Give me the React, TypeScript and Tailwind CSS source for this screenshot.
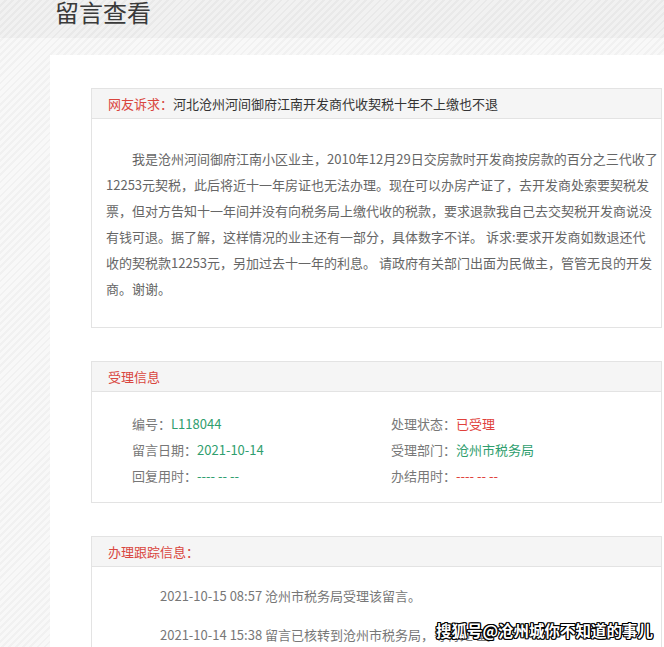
import React from "react";

const font = "font-['Noto_Sans_CJK_SC','Microsoft_YaHei',sans-serif]";

const Section = ({ title, children }: { title: React.ReactNode; children: React.ReactNode }) => (
  <div className="w-[571px] border border-[#e3e3e3] bg-white">
    <div className="h-[30px] flex items-center pl-[16px] bg-[#f5f5f5] border-b border-[#e3e3e3] text-[13px]">
      {title}
    </div>
    {children}
  </div>
);

const InfoRow = ({ label, value, color }: { label: string; value: string; color: string }) => (
  <div className="flex">
    <span className="text-[#777]">{label}：</span>
    <span className={color}>{value}</span>
  </div>
);

export default function App() {
  return (
    <div
      className={`relative h-[647px] w-[664px] overflow-hidden ${font} bg-[repeating-linear-gradient(135deg,#f8f8f8_0px,#f8f8f8_3px,#f1f1f1_3px,#f1f1f1_5px)]`}
    >
      {/* page title bar */}
      <div className="h-[38px] pl-[55px] bg-[repeating-linear-gradient(135deg,#f1f1f1_0px,#f1f1f1_3px,#e9e9e9_3px,#e9e9e9_5px)]">
        <h1 className="text-[24px] leading-[24px] text-[#3a3a3a]">留言查看</h1>
      </div>

      {/* white card */}
      <div className="ml-[50px] mt-[17px] bg-white pl-[41px] pt-[33px] pb-10 flex flex-col gap-[33px]">
        <Section
          title={
            <>
              <span className="text-[#d9463e]">网友诉求：</span>
              <span className="text-[#333]">河北沧州河间御府江南开发商代收契税十年不上缴也不退</span>
            </>
          }
        >
          <p className="pl-[14px] w-[566px] pt-[27px] pb-[25px] text-[13px] leading-[26px] text-[#666] indent-[2em]">
            我是沧州河间御府江南小区业主，2010年12月29日交房款时开发商按房款的百分之三代收了12253元契税，此后将近十一年房证也无法办理。现在可以办房产证了，去开发商处索要契税发票，但对方告知十一年间并没有向税务局上缴代收的税款，要求退款我自己去交契税开发商说没有钱可退。据了解，这样情况的业主还有一部分，具体数字不详。
            诉求:要求开发商如数退还代收的契税款12253元，另加过去十一年的利息。 请政府有关部门出面为民做主，管管无良的开发商。谢谢。
          </p>
        </Section>

        <Section title={<span className="text-[#d9463e]">受理信息</span>}>
          <div className="pl-[40px] pt-[19px] pb-[13px] grid grid-cols-[259px_1fr] text-[13px] leading-[26px]">
            <InfoRow label="编号" value="L118044" color="text-[#2f9e6e]" />
            <InfoRow label="处理状态" value="已受理" color="text-[#e0413b]" />
            <InfoRow label="留言日期" value="2021-10-14" color="text-[#2f9e6e]" />
            <InfoRow label="受理部门" value="沧州市税务局" color="text-[#2f9e6e]" />
            <InfoRow label="回复用时" value="---- -- --" color="text-[#2f9e6e]" />
            <InfoRow label="办结用时" value="---- -- --" color="text-[#e0413b]" />
          </div>
        </Section>

        <Section title={<span className="text-[#d9463e]">办理跟踪信息：</span>}>
          <div className="pl-[68px] pt-[16px] pb-6 flex flex-col gap-[13px] text-[13px] leading-[26px] text-[#777]">
            <p>2021-10-15 08:57 沧州市税务局受理该留言。</p>
            <p>2021-10-14 15:38 留言已核转到沧州市税务局，等待处理。</p>
            <p>2021-10-14 10:12 留言已提交。</p>
          </div>
        </Section>
      </div>

      {/* watermark */}
      <span className="absolute left-[436px] top-[619px] text-[15.5px] leading-[22px] font-bold text-white [text-shadow:1px_1px_0_#000,-1px_-1px_0_#000,1px_-1px_0_#000,-1px_1px_0_#000,0_1px_0_#000,0_-1px_0_#000,1px_0_0_#000,-1px_0_0_#000]">
        搜狐号@沧州城你不知道的事儿
      </span>
    </div>
  );
}
